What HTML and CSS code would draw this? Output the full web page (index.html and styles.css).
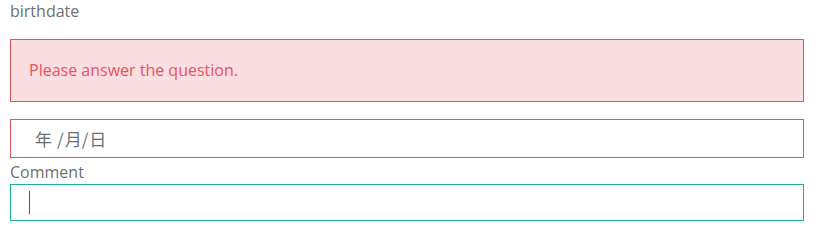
FILE: index.html
```html
<!DOCTYPE html>
<html>
<head>
<meta charset="utf-8">
<link rel="stylesheet" href="styles.css">
</head>
<body>
<div class="form">
  <div class="question">
    <div class="title">birthdate</div>
    <div class="error">Please answer the question.</div>
    <div class="date-input">
      <span class="seg">年</span><span class="sep sep-first">/</span><span class="seg">月</span><span class="sep">/</span><span class="seg">日</span>
    </div>
  </div>
  <div class="question">
    <div class="title comment-title">Comment</div>
    <div class="comment-input"><span class="caret"></span></div>
  </div>
</div>
</body>
</html>
```

FILE: styles.css
```css
html, body {
  margin: 0;
  padding: 0;
  background: #ffffff;
}
body {
  font-family: "Open Sans", "Noto Sans CJK SC", sans-serif;
  font-size: 16px;
  color: #6d7072;
}
.form {
  width: 794px;
  padding-left: 10px;
  display: flex;
  flex-direction: column;
}
.question {
  display: flex;
  flex-direction: column;
}
.title {
  line-height: 22px;
  height: 22px;
  color: #6d7072;
}
.error {
  margin-top: 17px;
  border: 1px solid #e8525f;
  background: #fbdee2;
  color: #e8525f;
  padding: 20px 18px;
  line-height: 21px;
}
.date-input {
  margin-top: 17px;
  border: 1px solid #e8525f;
  height: 37px;
  padding-left: 24px;
  display: flex;
  align-items: center;
  font-family: "Noto Sans CJK SC", sans-serif;
  font-size: 17px;
  font-weight: 400;
  color: #6d7072;
}
.seg {
  display: inline-block;
}
.sep {
  display: inline-block;
  margin: 0 1px 0 0;
}
.sep-first {
  margin-left: 5px;
}
.comment-title {
  margin-top: 3px;
  height: 23px;
  line-height: 22px;
}
.comment-input {
  border: 1px solid #19b394;
  height: 35px;
  padding-left: 18px;
  display: flex;
  align-items: center;
}
.caret {
  display: block;
  width: 1px;
  height: 23px;
  background: #555555;
}
```
